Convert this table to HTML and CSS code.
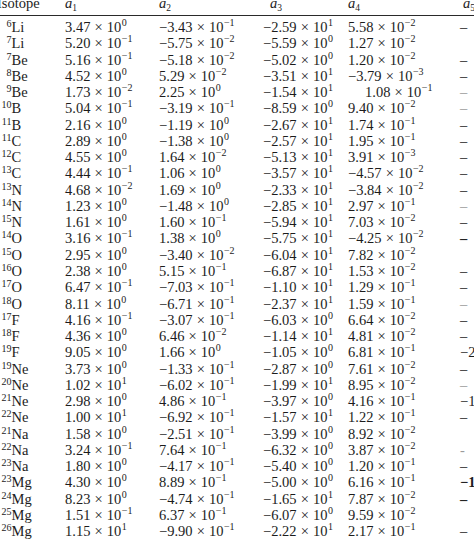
FILE: index.html
```html
<!DOCTYPE html>
<html>
<head>
<meta charset="utf-8">
<link rel="stylesheet" href="styles.css">
</head>
<body>
<div class="table">
  <div class="row head">
    <div class="c lab hlab">Isotope</div>
    <div class="c"><i>a</i><sub>1</sub></div>
    <div class="c"><i>a</i><sub>2</sub></div>
    <div class="c h3"><i>a</i><sub>3</sub></div>
    <div class="c"><i>a</i><sub>4</sub></div>
    <div class="c h5"><i>a</i><sub>5</sub></div>
  </div>
  <div class="tbody">
    <div class="row"><div class="c lab"><span class="m">6</span>Li</div><div class="c">3.47 × 10<sup>0</sup></div><div class="c">−3.43 × 10<sup>−1</sup></div><div class="c">−2.59 × 10<sup>1</sup></div><div class="c">5.58 × 10<sup>−2</sup></div><div class="c">–</div></div>
    <div class="row"><div class="c lab"><span class="m">7</span>Li</div><div class="c">5.20 × 10<sup>−1</sup></div><div class="c">−5.75 × 10<sup>−2</sup></div><div class="c">−5.59 × 10<sup>0</sup></div><div class="c">1.27 × 10<sup>−2</sup></div><div class="c"></div></div>
    <div class="row"><div class="c lab"><span class="m">7</span>Be</div><div class="c">5.16 × 10<sup>−1</sup></div><div class="c">−5.18 × 10<sup>−2</sup></div><div class="c">−5.02 × 10<sup>0</sup></div><div class="c">1.20 × 10<sup>−2</sup></div><div class="c">–</div></div>
    <div class="row"><div class="c lab"><span class="m">8</span>Be</div><div class="c">4.52 × 10<sup>0</sup></div><div class="c">5.29 × 10<sup>−2</sup></div><div class="c">−3.51 × 10<sup>1</sup></div><div class="c">−3.79 × 10<sup>−3</sup></div><div class="c">–</div></div>
    <div class="row"><div class="c lab"><span class="m">9</span>Be</div><div class="c">1.73 × 10<sup>−2</sup></div><div class="c">2.25 × 10<sup>0</sup></div><div class="c">−1.54 × 10<sup>1</sup></div><div class="c ind">1.08 × 10<sup>−1</sup></div><div class="c faint">–</div></div>
    <div class="row"><div class="c lab"><span class="m">10</span>B</div><div class="c">5.04 × 10<sup>−1</sup></div><div class="c">−3.19 × 10<sup>−1</sup></div><div class="c">−8.59 × 10<sup>0</sup></div><div class="c">9.40 × 10<sup>−2</sup></div><div class="c faint">–</div></div>
    <div class="row"><div class="c lab"><span class="m">11</span>B</div><div class="c">2.16 × 10<sup>0</sup></div><div class="c">−1.19 × 10<sup>0</sup></div><div class="c">−2.67 × 10<sup>1</sup></div><div class="c">1.74 × 10<sup>−1</sup></div><div class="c">–</div></div>
    <div class="row"><div class="c lab"><span class="m">11</span>C</div><div class="c">2.89 × 10<sup>0</sup></div><div class="c">−1.38 × 10<sup>0</sup></div><div class="c">−2.57 × 10<sup>1</sup></div><div class="c">1.95 × 10<sup>−1</sup></div><div class="c">–</div></div>
    <div class="row"><div class="c lab"><span class="m">12</span>C</div><div class="c">4.55 × 10<sup>0</sup></div><div class="c">1.64 × 10<sup>−2</sup></div><div class="c">−5.13 × 10<sup>1</sup></div><div class="c">3.91 × 10<sup>−3</sup></div><div class="c">–</div></div>
    <div class="row"><div class="c lab"><span class="m">13</span>C</div><div class="c">4.44 × 10<sup>−1</sup></div><div class="c">1.06 × 10<sup>0</sup></div><div class="c">−3.57 × 10<sup>1</sup></div><div class="c">−4.57 × 10<sup>−2</sup></div><div class="c">–</div></div>
    <div class="row"><div class="c lab"><span class="m">13</span>N</div><div class="c">4.68 × 10<sup>−2</sup></div><div class="c">1.69 × 10<sup>0</sup></div><div class="c">−2.33 × 10<sup>1</sup></div><div class="c">−3.84 × 10<sup>−2</sup></div><div class="c">–</div></div>
    <div class="row"><div class="c lab"><span class="m">14</span>N</div><div class="c">1.23 × 10<sup>0</sup></div><div class="c">−1.48 × 10<sup>0</sup></div><div class="c">−2.85 × 10<sup>1</sup></div><div class="c">2.97 × 10<sup>−1</sup></div><div class="c faint">–</div></div>
    <div class="row"><div class="c lab"><span class="m">15</span>N</div><div class="c">1.61 × 10<sup>0</sup></div><div class="c">1.60 × 10<sup>−1</sup></div><div class="c">−5.94 × 10<sup>1</sup></div><div class="c">7.03 × 10<sup>−2</sup></div><div class="c">–</div></div>
    <div class="row"><div class="c lab"><span class="m">14</span>O</div><div class="c">3.16 × 10<sup>−1</sup></div><div class="c">1.38 × 10<sup>0</sup></div><div class="c">−5.75 × 10<sup>1</sup></div><div class="c">−4.25 × 10<sup>−2</sup></div><div class="c bold">–</div></div>
    <div class="row"><div class="c lab"><span class="m">15</span>O</div><div class="c">2.95 × 10<sup>0</sup></div><div class="c">−3.40 × 10<sup>−2</sup></div><div class="c">−6.04 × 10<sup>1</sup></div><div class="c">7.82 × 10<sup>−2</sup></div><div class="c"></div></div>
    <div class="row"><div class="c lab"><span class="m">16</span>O</div><div class="c">2.38 × 10<sup>0</sup></div><div class="c">5.15 × 10<sup>−1</sup></div><div class="c">−6.87 × 10<sup>1</sup></div><div class="c">1.53 × 10<sup>−2</sup></div><div class="c">–</div></div>
    <div class="row"><div class="c lab"><span class="m">17</span>O</div><div class="c">6.47 × 10<sup>−1</sup></div><div class="c">−7.03 × 10<sup>−1</sup></div><div class="c">−1.10 × 10<sup>1</sup></div><div class="c">1.29 × 10<sup>−1</sup></div><div class="c">–</div></div>
    <div class="row"><div class="c lab"><span class="m">18</span>O</div><div class="c">8.11 × 10<sup>0</sup></div><div class="c">−6.71 × 10<sup>−1</sup></div><div class="c">−2.37 × 10<sup>1</sup></div><div class="c">1.59 × 10<sup>−1</sup></div><div class="c faint">–</div></div>
    <div class="row"><div class="c lab"><span class="m">17</span>F</div><div class="c">4.16 × 10<sup>−1</sup></div><div class="c">−3.07 × 10<sup>−1</sup></div><div class="c">−6.03 × 10<sup>0</sup></div><div class="c">6.64 × 10<sup>−2</sup></div><div class="c">–</div></div>
    <div class="row"><div class="c lab"><span class="m">18</span>F</div><div class="c">4.36 × 10<sup>0</sup></div><div class="c">6.46 × 10<sup>−2</sup></div><div class="c">−1.14 × 10<sup>1</sup></div><div class="c">4.81 × 10<sup>−2</sup></div><div class="c">–</div></div>
    <div class="row"><div class="c lab"><span class="m">19</span>F</div><div class="c">9.05 × 10<sup>0</sup></div><div class="c">1.66 × 10<sup>0</sup></div><div class="c">−1.05 × 10<sup>0</sup></div><div class="c">6.81 × 10<sup>−1</sup></div><div class="c">−2.13</div></div>
    <div class="row"><div class="c lab"><span class="m">19</span>Ne</div><div class="c">3.73 × 10<sup>0</sup></div><div class="c">−1.33 × 10<sup>−1</sup></div><div class="c">−2.87 × 10<sup>0</sup></div><div class="c">7.61 × 10<sup>−2</sup></div><div class="c">–</div></div>
    <div class="row"><div class="c lab"><span class="m">20</span>Ne</div><div class="c">1.02 × 10<sup>1</sup></div><div class="c">−6.02 × 10<sup>−1</sup></div><div class="c">−1.99 × 10<sup>1</sup></div><div class="c">8.95 × 10<sup>−2</sup></div><div class="c faint">–</div></div>
    <div class="row"><div class="c lab"><span class="m">21</span>Ne</div><div class="c">2.98 × 10<sup>0</sup></div><div class="c">4.86 × 10<sup>−1</sup></div><div class="c">−3.97 × 10<sup>0</sup></div><div class="c">4.16 × 10<sup>−1</sup></div><div class="c">−1.12</div></div>
    <div class="row"><div class="c lab"><span class="m">22</span>Ne</div><div class="c">1.00 × 10<sup>1</sup></div><div class="c">−6.92 × 10<sup>−1</sup></div><div class="c">−1.57 × 10<sup>1</sup></div><div class="c">1.22 × 10<sup>−1</sup></div><div class="c">–</div></div>
    <div class="row"><div class="c lab"><span class="m">21</span>Na</div><div class="c">1.58 × 10<sup>0</sup></div><div class="c">−2.51 × 10<sup>−1</sup></div><div class="c">−3.99 × 10<sup>0</sup></div><div class="c">8.92 × 10<sup>−2</sup></div><div class="c"></div></div>
    <div class="row"><div class="c lab"><span class="m">22</span>Na</div><div class="c">3.24 × 10<sup>−1</sup></div><div class="c">7.64 × 10<sup>−1</sup></div><div class="c">−6.32 × 10<sup>0</sup></div><div class="c">3.87 × 10<sup>−2</sup></div><div class="c faint">-</div></div>
    <div class="row"><div class="c lab"><span class="m">23</span>Na</div><div class="c">1.80 × 10<sup>0</sup></div><div class="c">−4.17 × 10<sup>−1</sup></div><div class="c">−5.40 × 10<sup>0</sup></div><div class="c">1.20 × 10<sup>−1</sup></div><div class="c">–</div></div>
    <div class="row"><div class="c lab"><span class="m">23</span>Mg</div><div class="c">4.30 × 10<sup>0</sup></div><div class="c">8.89 × 10<sup>−1</sup></div><div class="c">−5.00 × 10<sup>0</sup></div><div class="c">6.16 × 10<sup>−1</sup></div><div class="c bold">−1.41</div></div>
    <div class="row"><div class="c lab"><span class="m">24</span>Mg</div><div class="c">8.23 × 10<sup>0</sup></div><div class="c">−4.74 × 10<sup>−1</sup></div><div class="c">−1.65 × 10<sup>1</sup></div><div class="c">7.87 × 10<sup>−2</sup></div><div class="c bold">–</div></div>
    <div class="row"><div class="c lab"><span class="m">25</span>Mg</div><div class="c">1.51 × 10<sup>−1</sup></div><div class="c">6.37 × 10<sup>−1</sup></div><div class="c">−6.07 × 10<sup>0</sup></div><div class="c">9.59 × 10<sup>−2</sup></div><div class="c"></div></div>
    <div class="row"><div class="c lab"><span class="m">26</span>Mg</div><div class="c">1.15 × 10<sup>1</sup></div><div class="c">−9.90 × 10<sup>−1</sup></div><div class="c">−2.22 × 10<sup>1</sup></div><div class="c">2.17 × 10<sup>−1</sup></div><div class="c">–</div></div>
  </div>
</div>
</body>
</html>
```
FILE: styles.css
```css
html, body {
  margin: 0;
  padding: 0;
  background: #ffffff;
}
body {
  width: 474px;
  height: 539px;
  overflow: hidden;
  font-family: "Liberation Serif", "Times New Roman", serif;
  font-size: 14.5px;
  color: #1c1c1c;
}
.table {
  width: 520px;
}
.row {
  display: grid;
  grid-template-columns: 65px 94px 104px 85px 112px 60px;
  height: 16.27px;
  line-height: 16.27px;
  white-space: nowrap;
  word-spacing: 0.5px;
}
.head {
  height: 15px;
  line-height: 6px;
  border-bottom: 1.6px solid #2a2a2a;
  word-spacing: 0;
}
.hlab {
  margin-left: -3px;
}
.h3 {
  padding-left: 7px;
}
.h5 {
  padding-left: 3px;
}
.head i {
  font-style: italic;
}
.head sub {
  font-size: 9.5px;
  line-height: 0;
  vertical-align: -3px;
}
.tbody {
  padding-top: 3px;
}
.m {
  display: inline-block;
  width: 11.5px;
  text-align: right;
  font-size: 10px;
  line-height: 0;
  vertical-align: 5px;
}
sup {
  font-size: 10px;
  line-height: 0;
  vertical-align: 6px;
  margin-left: 0.5px;
}
.ind {
  padding-left: 17px;
}
.faint {
  color: #9a9a9a;
}
.bold {
  font-weight: bold;
}
```
